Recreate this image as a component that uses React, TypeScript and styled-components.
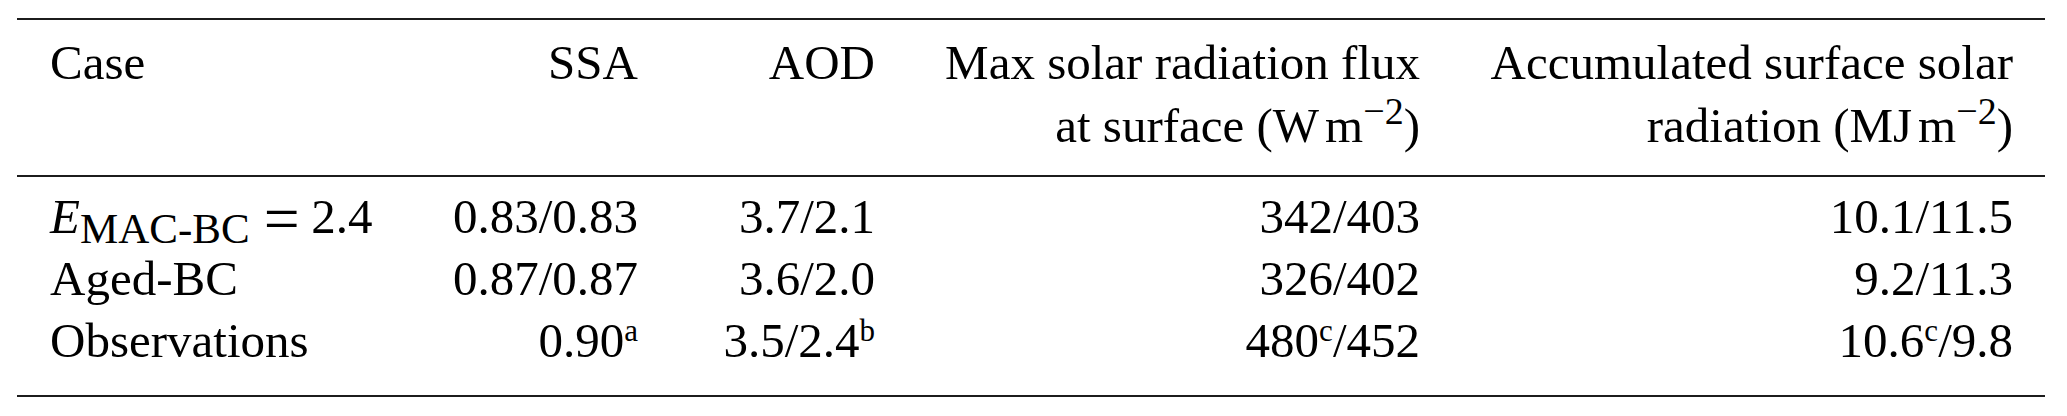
import React from "react";
import styled, { createGlobalStyle } from "styled-components";

const SERIF = `"Liberation Serif", "Times New Roman", Times, serif`;

const Global = createGlobalStyle`
  html, body { margin: 0; padding: 0; background: #ffffff; }
  body {
    font-family: ${SERIF};
    color: #000000;
  }
`;

const Page = styled.div`
  padding: 18px 0 0 17px;
`;

const Table = styled.table`
  width: 2028px;
  border-collapse: collapse;
  table-layout: fixed;
  font-family: ${SERIF};
  font-size: 49px;
  line-height: 62px;
  color: #000000;
  border-top: 2px solid #1c1c1c;
  border-bottom: 2px solid #1c1c1c;
`;

const Col = styled.col<{ $w: number }>`
  width: ${(p) => p.$w}px;
`;

const Head = styled.thead`
  border-bottom: 2px solid #1c1c1c;
`;

const HeadCell = styled.th<{ $left?: boolean }>`
  font-family: ${SERIF};
  font-weight: normal;
  text-align: ${(p) => (p.$left ? "left" : "right")};
  vertical-align: top;
  padding: 11px 0 18px;
  line-height: 63px;
  white-space: nowrap;
  &:first-child { padding-left: 33px; }
  &:last-child { padding-right: 32px; }
`;

const Body = styled.tbody`
  tr:first-child td { padding-top: 9px; }
  tr:last-child td { padding-bottom: 23px; }
`;

const Cell = styled.td<{ $left?: boolean }>`
  font-family: ${SERIF};
  text-align: ${(p) => (p.$left ? "left" : "right")};
  padding: 0;
  white-space: nowrap;
  &:first-child { padding-left: 33px; }
  &:last-child { padding-right: 32px; }
`;

const Unit = styled.sup`
  font-size: 38px;
  line-height: 0;
  vertical-align: 18px;
`;

const Mark = styled.sup`
  font-size: 31px;
  line-height: 0;
  vertical-align: 16px;
`;

const Sub = styled.sub`
  font-size: 43px;
  line-height: 0;
  vertical-align: -10px;
`;

const Ital = styled.i`
  font-style: italic;
`;

const Eq = styled.span`
  display: inline-block;
  line-height: 0;
  margin: 0 16px 0 18px;
  transform: scale(1.3, 1.35) translateY(2px);
`;

const Thin = styled.span`
  margin-left: 6px;
`;

type Row = { c: React.ReactNode; ssa: React.ReactNode; aod: React.ReactNode; max: React.ReactNode; acc: React.ReactNode };

const rows: Row[] = [
  {
    c: (
      <>
        <Ital>E</Ital>
        <Sub>MAC-BC</Sub>
        <Eq>=</Eq>2.4
      </>
    ),
    ssa: "0.83/0.83",
    aod: "3.7/2.1",
    max: "342/403",
    acc: "10.1/11.5",
  },
  { c: "Aged-BC", ssa: "0.87/0.87", aod: "3.6/2.0", max: "326/402", acc: "9.2/11.3" },
  {
    c: "Observations",
    ssa: (
      <>
        0.90<Mark>a</Mark>
      </>
    ),
    aod: (
      <>
        3.5/2.4<Mark>b</Mark>
      </>
    ),
    max: (
      <>
        480<Mark>c</Mark>/452
      </>
    ),
    acc: (
      <>
        10.6<Mark>c</Mark>/9.8
      </>
    ),
  },
];

export default function App() {
  return (
    <>
      <Global />
      <Page>
        <Table>
          <colgroup>
            <Col $w={423} />
            <Col $w={198} />
            <Col $w={237} />
            <Col $w={545} />
            <Col $w={625} />
          </colgroup>
          <Head>
            <tr>
              <HeadCell $left>Case</HeadCell>
              <HeadCell>SSA</HeadCell>
              <HeadCell>AOD</HeadCell>
              <HeadCell>
                Max solar radiation flux
                <br />
                at surface (W<Thin>m</Thin>
                <Unit>−2</Unit>)
              </HeadCell>
              <HeadCell>
                Accumulated surface solar
                <br />
                radiation (MJ<Thin>m</Thin>
                <Unit>−2</Unit>)
              </HeadCell>
            </tr>
          </Head>
          <Body>
            {rows.map((r, i) => (
              <tr key={i}>
                <Cell $left>{r.c}</Cell>
                <Cell>{r.ssa}</Cell>
                <Cell>{r.aod}</Cell>
                <Cell>{r.max}</Cell>
                <Cell>{r.acc}</Cell>
              </tr>
            ))}
          </Body>
        </Table>
      </Page>
    </>
  );
}
